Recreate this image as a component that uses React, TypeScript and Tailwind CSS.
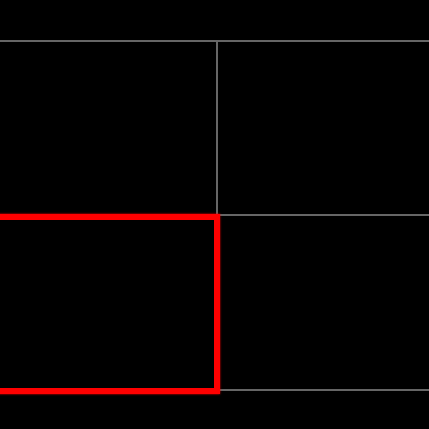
export default function App() {
  const cells = [0, 1, 2, 3, 4, 5];

  return (
    <div className="h-[429px] w-[429px] overflow-hidden bg-black pt-[40px]">
      <div className="grid w-[436px] grid-cols-[218px_218px] grid-rows-[174px_175px_60px]">
        {cells.map((i) => (
          <div
            key={i}
            className={
              i < 4
                ? "relative border-t-2 border-r-2 border-[#666666]"
                : "relative border-t-2 border-[#666666]"
            }
          >
            {i === 2 && (
              <div className="absolute -left-[10px] -top-[2px] -right-[4px] -bottom-[5px] z-10 border-[6px] border-[#ff0000] shadow-[0_0_2px_#ff0000]" />
            )}
          </div>
        ))}
      </div>
    </div>
  );
}
